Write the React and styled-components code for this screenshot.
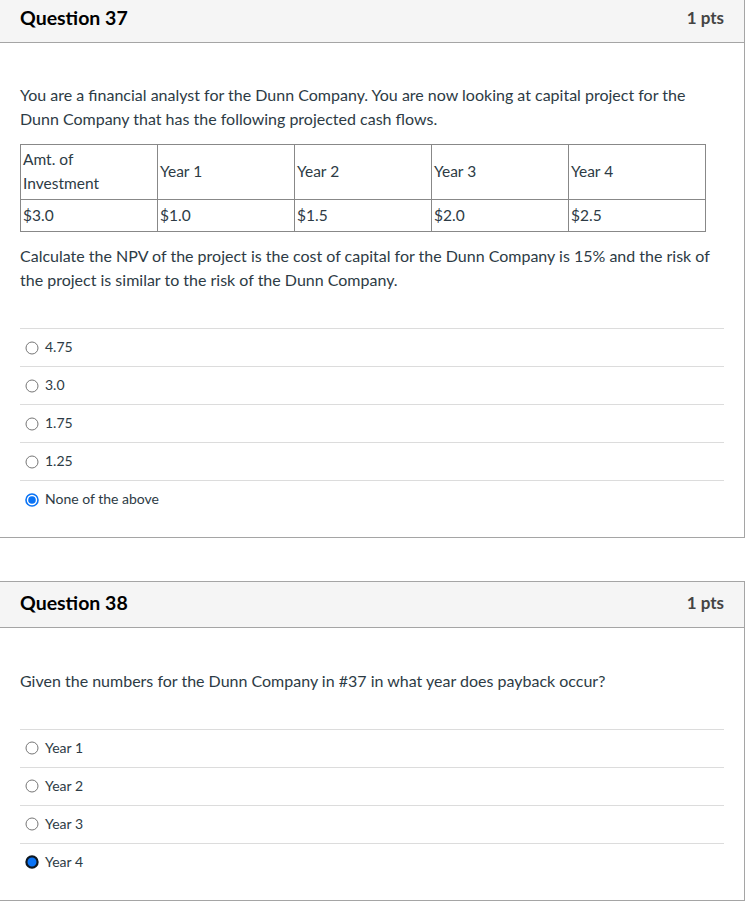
import React from "react";
import styled, { createGlobalStyle } from "styled-components";

const GlobalStyle = createGlobalStyle`
  body {
    margin: 0;
    background: #fff;
    font-family: Lato, "Open Sans", sans-serif;
    color: #2d3b45;
  }
`;

const Page = styled.div`
  width: 748px;
  overflow: hidden;
`;

const Panel = styled.div`
  box-sizing: border-box;
  width: 746px;
  margin-left: -1px;
  margin-top: ${(p) => (p.first ? "-4px" : "43px")};
  border: 1px solid #a5a5a5;
`;

const Header = styled.div`
  display: flex;
  justify-content: space-between;
  align-items: center;
  box-sizing: border-box;
  height: 46px;
  padding: 0 20px 4px 20px;
  background: #f5f5f5;
  border-bottom: 1px solid #a5a5a5;
`;

const Title = styled.div`
  font-size: 19.5px;
  font-weight: 700;
  color: #000;
`;

const Points = styled.div`
  font-size: 17px;
  font-weight: 700;
  color: #444;
`;

const Body = styled.div`
  padding: ${(p) => p.top}px 20px 19px 20px;
`;

const Text = styled.p`
  margin: 0;
  font-size: 16px;
  line-height: 23.5px;
  color: #2d3b45;
`;

const Table = styled.table`
  border-collapse: collapse;
  width: 685px;
  margin: 14px 0 12px;
  table-layout: fixed;
`;

const Col = styled.col`
  width: 137px;
`;

const Cell = styled.td`
  border: 1px solid #888;
  padding: ${(p) => (p.tall ? "2px 2px 4px" : "3px 2px 4px")};
  font-size: 15.5px;
  line-height: 24px;
  color: #2d3b45;
  vertical-align: middle;
`;

const Answers = styled.div`
  margin-top: ${(p) => p.gap}px;
`;

const Answer = styled.label`
  display: flex;
  align-items: center;
  gap: 6px;
  box-sizing: border-box;
  height: 38px;
  padding: 0 0 2px 5px;
  border-top: 1px solid #dcdcdc;
  font-size: 14px;
  color: #2d3b45;
`;

const RadioIcon = styled.svg`
  margin-top: 2px;
`;

const Radio = ({ mode }) => (
  <RadioIcon width="14" height="14" viewBox="0 0 14 14">
    {mode === "focus" && (
      <>
        <circle cx="7" cy="7" r="6" fill="#fff" stroke="#0a73f5" strokeWidth="1.6" />
        <circle cx="7" cy="7" r="3.8" fill="#0a73f5" />
      </>
    )}
    {mode === "checked" && (
      <circle cx="7" cy="7" r="5.6" fill="#0a73f5" stroke="#101820" strokeWidth="2.2" />
    )}
    {!mode && <circle cx="7" cy="7" r="6" fill="#fff" stroke="#767676" strokeWidth="1" />}
  </RadioIcon>
);

const q37 = ["4.75", "3.0", "1.75", "1.25", "None of the above"];
const q38 = ["Year 1", "Year 2", "Year 3", "Year 4"];
const years = ["Year 1", "Year 2", "Year 3", "Year 4"];
const flows = ["$3.0", "$1.0", "$1.5", "$2.0", "$2.5"];

export default function App() {
  return (
    <Page>
      <GlobalStyle />
      <Panel first>
        <Header>
          <Title>Question 37</Title>
          <Points>1 pts</Points>
        </Header>
        <Body top={40}>
          <Text>
            You are a financial analyst for the Dunn Company. You are now looking at capital project for the
            Dunn Company that has the following projected cash flows.
          </Text>
          <Table>
            <colgroup>
              <Col />
              <Col />
              <Col />
              <Col />
              <Col />
            </colgroup>
            <tbody>
              <tr>
                <Cell tall>
                  Amt. of
                  <br />
                  Investment
                </Cell>
                {years.map((y) => (
                  <Cell key={y} tall>{y}</Cell>
                ))}
              </tr>
              <tr>
                {flows.map((f) => (
                  <Cell key={f}>{f}</Cell>
                ))}
              </tr>
            </tbody>
          </Table>
          <Text>
            Calculate the NPV of the project is the cost of capital for the Dunn Company is 15% and the risk of
            the project is similar to the risk of the Dunn Company.
          </Text>
          <Answers gap={37}>
            {q37.map((a, i) => (
              <Answer key={a}>
                <Radio mode={i === 4 ? "focus" : null} />
                {a}
              </Answer>
            ))}
          </Answers>
        </Body>
      </Panel>
      <Panel>
        <Header>
          <Title>Question 38</Title>
          <Points>1 pts</Points>
        </Header>
        <Body top={41}>
          <Text>Given the numbers for the Dunn Company in #37 in what year does payback occur?</Text>
          <Answers gap={36}>
            {q38.map((a, i) => (
              <Answer key={a}>
                <Radio mode={i === 3 ? "checked" : null} />
                {a}
              </Answer>
            ))}
          </Answers>
        </Body>
      </Panel>
    </Page>
  );
}
